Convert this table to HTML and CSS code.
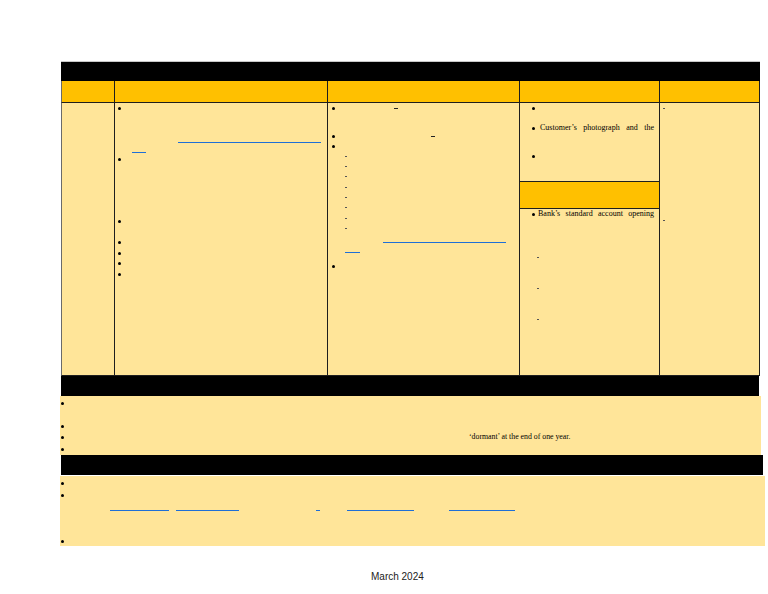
FILE: index.html
```html
<!DOCTYPE html>
<html lang="en">
<head>
<meta charset="utf-8">
<title>Account opening requirements</title>
<link rel="stylesheet" href="styles.css">
</head>
<body>
<div class="page">
  <div class="title-bar"></div>

  <div class="grid">
    <div class="hcell first"></div>
    <div class="hcell"></div>
    <div class="hcell"></div>
    <div class="hcell"></div>
    <div class="hcell"></div>

    <div class="bcell first"></div>

    <div class="bcell c2">
      <div class="ln"><span class="dot"></span></div>
      <div class="ln ul-ln m21"><span class="ul ml60 w143"></span></div>
      <div class="ln ul-ln"><span class="ul ml14 w14"></span></div>
      <div class="ln"><span class="dot"></span></div>
      <div class="ln m52"><span class="dot"></span></div>
      <div class="ln m11"><span class="dot"></span></div>
      <div class="ln m1"><span class="dot"></span></div>
      <div class="ln"><span class="dot"></span></div>
      <div class="ln m1"><span class="dot"></span></div>
    </div>

    <div class="bcell c3">
      <div class="ln"><span class="dot"></span><span class="endash ml59"></span></div>
      <div class="ln m18"><span class="dot"></span><span class="endash ml96"></span></div>
      <div class="ln"><span class="dot"></span></div>
      <div class="ln"><span class="dash ml13"></span></div>
      <div class="ln"><span class="dash ml13"></span></div>
      <div class="ln"><span class="dash ml13"></span></div>
      <div class="ln m1"><span class="dash ml13"></span></div>
      <div class="ln"><span class="dash ml13"></span></div>
      <div class="ln"><span class="dash ml13"></span></div>
      <div class="ln m1"><span class="dash ml13"></span></div>
      <div class="ln"><span class="dash ml13"></span></div>
      <div class="ln ul-ln m1"><span class="ul ml51 w123"></span></div>
      <div class="ln ul-ln"><span class="ul ml13 w15"></span></div>
      <div class="ln m7"><span class="dot"></span></div>
    </div>

    <div class="bcell c4">
      <div class="c4-top">
        <div class="ln"><span class="dot"></span></div>
        <div class="ln m10"><span class="dot"></span><span class="just gap5">Customer’s photograph and the</span></div>
        <div class="ln m18"><span class="dot"></span></div>
      </div>
      <div class="c4-band"></div>
      <div class="c4-bottom">
        <div class="ln"><span class="dot"></span><span class="just gap3">Bank’s standard account opening</span></div>
        <div class="ln m33"><span class="dash ml5"></span></div>
        <div class="ln m21"><span class="dash ml5"></span></div>
        <div class="ln m21"><span class="dash ml5"></span></div>
      </div>
    </div>

    <div class="bcell c5">
      <div class="ln"><span class="dash"></span></div>
      <div class="ln m102"><span class="dash"></span></div>
    </div>
  </div>

  <div class="bar bar1"></div>

  <div class="notes">
    <div class="ln m2"><span class="dot"></span></div>
    <div class="ln m13"><span class="dot"></span></div>
    <div class="ln m1"><span class="dot"></span><span class="note-text">‘dormant’ at the end of one year.</span></div>
    <div class="ln m2"><span class="dot"></span></div>
  </div>

  <div class="bar bar2"></div>

  <div class="notes2">
    <div class="ln m2"><span class="dot"></span></div>
    <div class="ln m2"><span class="dot"></span></div>
    <div class="ln ul-ln m2">
      <span class="ul ml49 w59"></span>
      <span class="ul ml7 w63"></span>
      <span class="ul ml77 w4"></span>
      <span class="ul ml27 w67"></span>
      <span class="ul ml35 w66"></span>
    </div>
    <div class="ln m24"><span class="dot"></span></div>
  </div>

  <div class="footer">March 2024</div>
</div>
</body>
</html>
```

FILE: styles.css
```css
* { box-sizing: border-box; }

html, body {
  margin: 0;
  padding: 0;
  background: #ffffff;
}

body {
  font-family: "Liberation Serif", "Times New Roman", serif;
  font-size: 8px;
  color: #000;
}

.page {
  padding: 61px 0 0 60px;
}

.title-bar {
  margin-left: 1px;
  width: 699px;
  height: 20px;
  background: #000;
  border-top: 1px solid #c8c8c8;
}

.grid {
  margin-left: 1px;
  width: 699px;
  display: grid;
  grid-template-columns: 53px 213px 192px 140px 100px;
  grid-template-rows: 22px 273px;
  border-right: 1px solid #1e1e1e;
}

.hcell {
  background: #ffc000;
  border-left: 1px solid #1e1e1e;
  border-bottom: 1px solid #1e1e1e;
}

.bcell {
  background: #ffe599;
  border-left: 1px solid #1e1e1e;
  border-bottom: 1px solid #1e1e1e;
}

.first { border-left-color: #6a6a6a; }

.c2 { padding-left: 3px; }
.c3 { padding-left: 4px; }
.c4 { display: flex; flex-direction: column; }
.c5 { padding-left: 3px; }

.c4-top {
  height: 78px;
  padding: 0 5px 0 12px;
}
.c4-band {
  height: 28px;
  background: #ffc000;
  border-top: 1px solid #1e1e1e;
  border-bottom: 1px solid #1e1e1e;
}
.c4-bottom {
  flex: 1;
  padding: 0 5px 0 12px;
}

.ln {
  display: flex;
  align-items: center;
  height: 10px;
}

.ul-ln { align-items: flex-end; }

.dot {
  flex: none;
  width: 3px;
  height: 3px;
  border-radius: 50%;
  background: #000;
}

.endash {
  flex: none;
  width: 4px;
  height: 1px;
  background: #222;
}

.dash {
  flex: none;
  width: 2px;
  height: 1px;
  background: #555;
}

.ul {
  flex: none;
  height: 1px;
  margin-bottom: 1px;
  background: #1f6fd6;
}

.just {
  flex: 1;
  line-height: 10px;
  white-space: nowrap;
  text-align: justify;
  text-align-last: justify;
  color: #000;
}
.gap5 { margin-left: 5px; }
.gap3 { margin-left: 3px; }

.bar {
  height: 20px;
  background: #000;
}
.bar1 {
  margin-left: 1px;
  width: 698px;
}
.bar2 {
  margin-left: 1px;
  width: 702px;
}

.notes {
  display: flow-root;
  width: 701px;
  height: 59px;
  background: #ffe599;
  padding-left: 1px;
}

.note-text {
  margin-left: 405px;
  font-size: 7.8px;
  line-height: 10px;
  white-space: nowrap;
  color: #000;
}

.notes2 {
  display: flow-root;
  margin-top: 1px;
  width: 705px;
  height: 70px;
  background: #ffe599;
  padding-left: 1px;
}

.footer {
  margin-top: 25px;
  padding-left: 311px;
  font-family: "Liberation Sans", Arial, sans-serif;
  font-size: 10px;
  line-height: 12px;
  color: #222;
}

/* spacing between lines of the document */
.m1 { margin-top: 1px; }
.m2 { margin-top: 2px; }
.m7 { margin-top: 7px; }
.m10 { margin-top: 10px; }
.m11 { margin-top: 11px; }
.m13 { margin-top: 13px; }
.m18 { margin-top: 18px; }
.m21 { margin-top: 21px; }
.m24 { margin-top: 24px; }
.m33 { margin-top: 33px; }
.m52 { margin-top: 52px; }
.m102 { margin-top: 102px; }

/* horizontal offsets inside a line */
.ml5 { margin-left: 5px; }
.ml7 { margin-left: 7px; }
.ml13 { margin-left: 13px; }
.ml14 { margin-left: 14px; }
.ml27 { margin-left: 27px; }
.ml35 { margin-left: 35px; }
.ml49 { margin-left: 49px; }
.ml51 { margin-left: 51px; }
.ml59 { margin-left: 59px; }
.ml60 { margin-left: 60px; }
.ml77 { margin-left: 77px; }
.ml96 { margin-left: 96px; }

.w4 { width: 4px; }
.w14 { width: 14px; }
.w15 { width: 15px; }
.w59 { width: 59px; }
.w63 { width: 63px; }
.w66 { width: 66px; }
.w67 { width: 67px; }
.w123 { width: 123px; }
.w143 { width: 143px; }
```
